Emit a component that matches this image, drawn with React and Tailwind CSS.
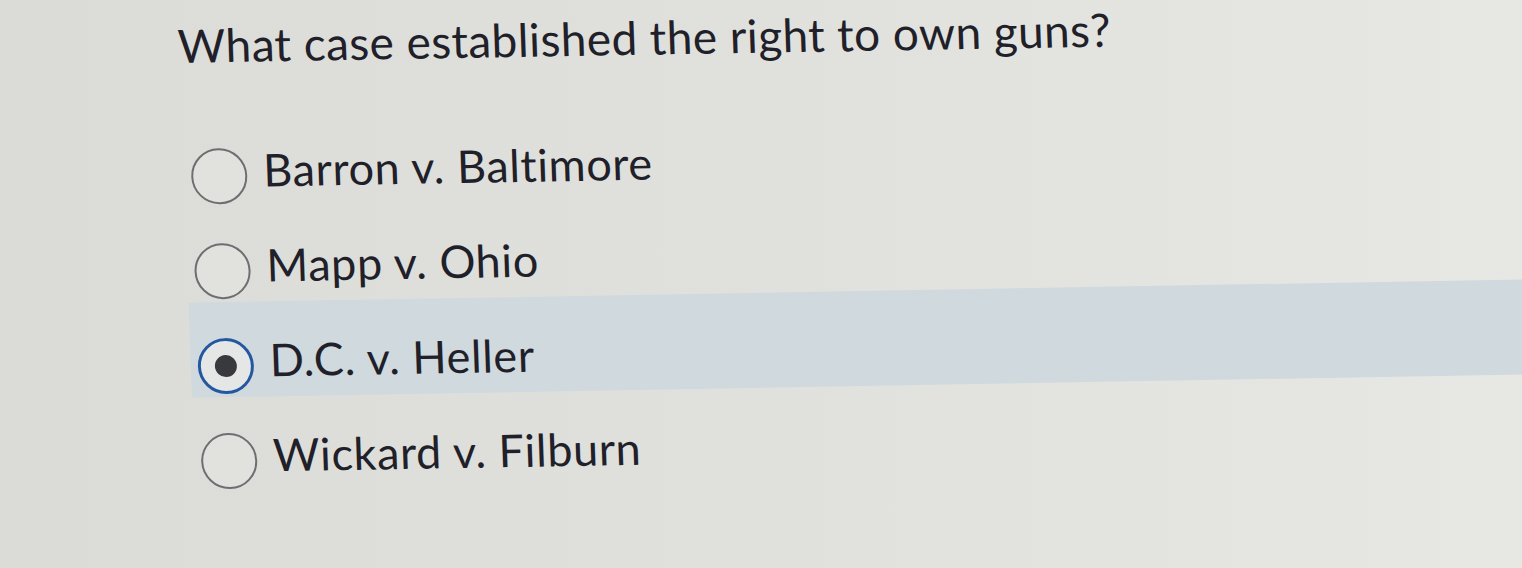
import { useState } from "react";

const OPTIONS = [
  "Barron v. Baltimore",
  "Mapp v. Ohio",
  "D.C. v. Heller",
  "Wickard v. Filburn",
];

function Radio({ checked }) {
  if (checked) {
    return (
      <span className="flex h-[56px] w-[56px] shrink-0 items-center justify-center rounded-full border-[3.5px] border-[#2358a0] bg-[#e4e7e6]">
        <span className="h-[22px] w-[22px] rounded-full bg-[#38383d]" />
      </span>
    );
  }
  return (
    <span className="h-[56px] w-[56px] shrink-0 rounded-full border-[2.5px] border-[#6e6e72] bg-[#e1e2de]" />
  );
}

export default function App() {
  const [selected, setSelected] = useState(2);

  return (
    <div
      className="h-[568px] w-full overflow-hidden bg-gradient-to-r from-[#dbdcd8] via-[#e0e1dd] to-[#e7e8e4] text-[#211f29]"
      style={{ fontFamily: "Lato, 'Open Sans', sans-serif" }}
    >
      {/* whole sheet sits a little askew */}
      <div className="w-[1600px] origin-top-left [transform:rotate(-1deg)_skewX(1deg)]">
        <h1 className="pl-[176px] pt-[21px] text-[46px] leading-[1.2] font-normal tracking-[0.4px] [font-variant-ligatures:none]">
          What case established the right to own guns?
        </h1>

        <div className="mt-[40px] pl-[178px]">
          {OPTIONS.map((label, i) => (
            <label
              key={label}
              onClick={() => setSelected(i)}
              className={`flex h-[95px] cursor-pointer items-center gap-4 pl-[7px] pt-[33px] ${
                selected === i ? "bg-[#cfd9de]" : ""
              }`}
            >
              <Radio checked={selected === i} />
              <span className="mb-[12px] text-[45px] leading-none tracking-[0.6px] [font-variant-ligatures:none]">
                {label}
              </span>
            </label>
          ))}
        </div>
      </div>
    </div>
  );
}
